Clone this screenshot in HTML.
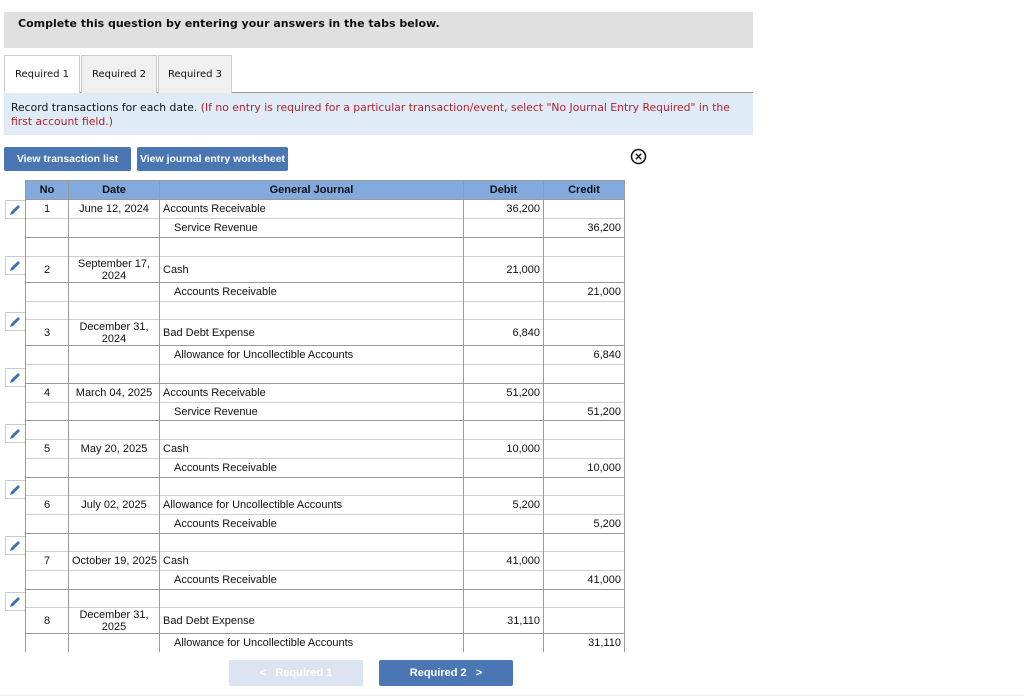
<!DOCTYPE html>
<html><head><meta charset="utf-8"><style>
*{box-sizing:border-box;margin:0;padding:0}
body{width:1024px;height:697px;background:#fff;position:relative;overflow:hidden;font-family:"Liberation Sans",Arial,sans-serif;font-size:11px;color:#111}
.abs{position:absolute}
.v{font-family:"DejaVu Sans",Verdana,sans-serif}
.top{left:4px;top:12px;width:749px;height:36px;background:#e0e0e0;font-weight:bold;font-size:11px;padding:5px 14px}
.tab{top:55px;height:38px;border:1px solid #ccc;border-bottom:none;background:#f0f0f0;font-size:10px;text-align:center;line-height:37px}
.tabline{left:4px;top:92px;width:749px;height:1px;background:#999}
.info{left:4px;top:93px;width:749px;height:42px;background:#dfecf8;font-size:10.8px;padding:8px 7px;line-height:14px;white-space:nowrap}
.btn{top:147px;height:24px;background:#4a77b4;color:#fff;font-weight:bold;font-size:10.5px;text-align:center;line-height:24px;border-radius:2px}
table{position:absolute;left:25px;top:180px;border-collapse:collapse;table-layout:fixed;width:599px}
td,th{border-left:1px solid #999;border-right:1px solid #999;border-top:1px solid #cfcfcf;padding:0 3px;font-size:11px;white-space:nowrap;overflow:hidden}
th{background:#82aadf;height:19px;border:1px solid #999;font-weight:bold}
td.c{text-align:center}
td.r{text-align:right}
td.d{white-space:normal;text-align:center;line-height:12px}
.ind{padding-left:14px}
tr.g td{border-top:1px solid #999}
.pen{left:5px;width:20px;height:19px;border:1px solid #ccc;border-right:none;background:#fff}
.nav{top:660px;height:26px;width:134px;border-radius:2px;color:#fff;font-weight:bold;font-size:11px;text-align:center;line-height:26px}
</style></head><body>
<div class="abs top v">Complete this question by entering your answers in the tabs below.</div>
<div class="abs tabline"></div>
<div class="abs tab v" style="left:4px;width:76px;background:#fff;height:39px">Required 1</div>
<div class="abs tab v" style="left:81px;width:76px">Required 2</div>
<div class="abs tab v" style="left:158px;width:74px">Required 3</div>
<div class="abs info v">Record transactions for each date. <span style="color:#b0232a">(If no entry is required for a particular transaction/event, select "No Journal Entry Required" in the<br>first account field.)</span></div>
<div class="abs btn" style="left:4px;width:127px">View transaction list</div>
<div class="abs btn" style="left:137px;width:151px">View journal entry worksheet</div>
<svg class="abs" style="left:630px;top:148px" width="17" height="17" viewBox="0 0 17 17"><circle cx="8.5" cy="8.5" r="7" fill="none" stroke="#111" stroke-width="1.5"/><path d="M5.8 5.8l5.4 5.4M11.2 5.8l-5.4 5.4" stroke="#111" stroke-width="1.4"/></svg>
<table>
<colgroup><col style="width:43px"><col style="width:91px"><col style="width:304px"><col style="width:80px"><col style="width:81px"></colgroup>
<tr><th>No</th><th>Date</th><th>General Journal</th><th>Debit</th><th>Credit</th></tr>
<tr style="height:19px"><td class="c">1</td><td class="c">June 12, 2024</td><td>Accounts Receivable</td><td class="r">36,200</td><td></td></tr>
<tr style="height:19px"><td></td><td></td><td class="ind">Service Revenue</td><td></td><td class="r">36,200</td></tr>
<tr class="g" style="height:19px"><td></td><td></td><td></td><td></td><td></td></tr>
<tr style="height:26px"><td class="c">2</td><td class="d">September 17, 2024</td><td>Cash</td><td class="r">21,000</td><td></td></tr>
<tr class="g" style="height:19px"><td></td><td></td><td class="ind">Accounts Receivable</td><td></td><td class="r">21,000</td></tr>
<tr style="height:18px"><td></td><td></td><td></td><td></td><td></td></tr>
<tr style="height:26px"><td class="c">3</td><td class="d">December 31, 2024</td><td>Bad Debt Expense</td><td class="r">6,840</td><td></td></tr>
<tr class="g" style="height:19px"><td></td><td></td><td class="ind">Allowance for Uncollectible Accounts</td><td></td><td class="r">6,840</td></tr>
<tr style="height:19px"><td></td><td></td><td></td><td></td><td></td></tr>
<tr class="g" style="height:19px"><td class="c">4</td><td class="c">March 04, 2025</td><td>Accounts Receivable</td><td class="r">51,200</td><td></td></tr>
<tr style="height:18px"><td></td><td></td><td class="ind">Service Revenue</td><td></td><td class="r">51,200</td></tr>
<tr class="g" style="height:19px"><td></td><td></td><td></td><td></td><td></td></tr>
<tr style="height:19px"><td class="c">5</td><td class="c">May 20, 2025</td><td>Cash</td><td class="r">10,000</td><td></td></tr>
<tr style="height:19px"><td></td><td></td><td class="ind">Accounts Receivable</td><td></td><td class="r">10,000</td></tr>
<tr class="g" style="height:18px"><td></td><td></td><td></td><td></td><td></td></tr>
<tr style="height:19px"><td class="c">6</td><td class="c">July 02, 2025</td><td>Allowance for Uncollectible Accounts</td><td class="r">5,200</td><td></td></tr>
<tr style="height:19px"><td></td><td></td><td class="ind">Accounts Receivable</td><td></td><td class="r">5,200</td></tr>
<tr class="g" style="height:18px"><td></td><td></td><td></td><td></td><td></td></tr>
<tr style="height:19px"><td class="c">7</td><td class="c">October 19, 2025</td><td>Cash</td><td class="r">41,000</td><td></td></tr>
<tr style="height:19px"><td></td><td></td><td class="ind">Accounts Receivable</td><td></td><td class="r">41,000</td></tr>
<tr class="g" style="height:18px"><td></td><td></td><td></td><td></td><td></td></tr>
<tr style="height:26px"><td class="c">8</td><td class="d">December 31, 2025</td><td>Bad Debt Expense</td><td class="r">31,110</td><td></td></tr>
<tr class="g" style="height:18px"><td></td><td></td><td class="ind">Allowance for Uncollectible Accounts</td><td></td><td class="r">31,110</td></tr>
</table>
<div class="abs" style="left:0;top:652px;width:700px;height:45px;background:#fff"></div>
<div class="abs pen" style="top:200px"></div>
<div class="abs pen" style="top:256px"></div>
<div class="abs pen" style="top:312px"></div>
<div class="abs pen" style="top:368px"></div>
<div class="abs pen" style="top:424px"></div>
<div class="abs pen" style="top:480px"></div>
<div class="abs pen" style="top:536px"></div>
<div class="abs pen" style="top:592px"></div>
<svg class="abs" style="left:0;top:0" width="30" height="640">
<g fill="#3d6fb8">
<path d="M10 215l1-3 7-7 2 2-7 7z" transform="translate(0,0)"/>
<path d="M10 215l1-3 7-7 2 2-7 7z" transform="translate(0,56)"/>
<path d="M10 215l1-3 7-7 2 2-7 7z" transform="translate(0,112)"/>
<path d="M10 215l1-3 7-7 2 2-7 7z" transform="translate(0,168)"/>
<path d="M10 215l1-3 7-7 2 2-7 7z" transform="translate(0,224)"/>
<path d="M10 215l1-3 7-7 2 2-7 7z" transform="translate(0,280)"/>
<path d="M10 215l1-3 7-7 2 2-7 7z" transform="translate(0,336)"/>
<path d="M10 215l1-3 7-7 2 2-7 7z" transform="translate(0,392)"/>
</g></svg>
<div class="abs nav" style="left:229px;background:#dbe4f0">&lt;&nbsp;&nbsp; Required 1</div>
<div class="abs nav" style="left:379px;background:#4a77b4">Required 2 &nbsp;&nbsp;&gt;</div>
<div class="abs" style="left:0;top:695px;width:1024px;height:1px;background:#eee"></div>
</body></html>
